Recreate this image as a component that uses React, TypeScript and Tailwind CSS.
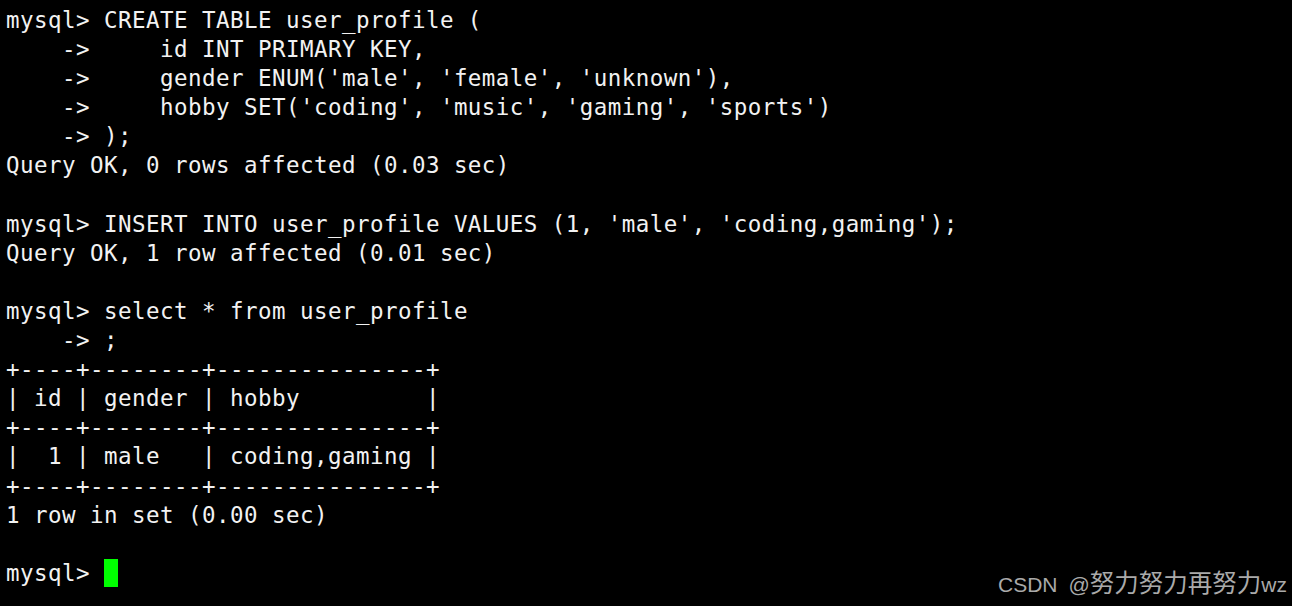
import React from "react";

const lines: string[] = [
  "mysql> CREATE TABLE user_profile (",
  "    ->     id INT PRIMARY KEY,",
  "    ->     gender ENUM('male', 'female', 'unknown'),",
  "    ->     hobby SET('coding', 'music', 'gaming', 'sports')",
  "    -> );",
  "Query OK, 0 rows affected (0.03 sec)",
  "",
  "mysql> INSERT INTO user_profile VALUES (1, 'male', 'coding,gaming');",
  "Query OK, 1 row affected (0.01 sec)",
  "",
  "mysql> select * from user_profile",
  "    -> ;",
  "+----+--------+---------------+",
  "| id | gender | hobby         |",
  "+----+--------+---------------+",
  "|  1 | male   | coding,gaming |",
  "+----+--------+---------------+",
  "1 row in set (0.00 sec)",
  "",
];

export default function App() {
  return (
    <div className="relative w-[1292px] h-[606px] bg-black overflow-hidden">
      <div
        className="pt-[6px] pl-[6px] text-[22.5px] leading-[29.1px] tracking-[0.45px] text-[#f2f2f2] whitespace-pre"
        style={{ fontFamily: '"DejaVu Sans Mono", monospace' }}
      >
        {lines.map((l, i) => (
          <div key={i} className="h-[29.1px]">
            {l}
          </div>
        ))}
        <div className="h-[29.1px] flex items-center">
          <span>mysql&gt; </span>
          <span className="inline-block w-[14px] h-[28px] bg-[#00ff00]" />
        </div>
      </div>
      <div
        className="absolute right-[5px] bottom-[11px] flex items-baseline text-[#aaaaaa] text-[21px] leading-none"
        style={{ fontFamily: '"Liberation Sans", "Noto Sans CJK SC", sans-serif' }}
      >
        <span>CSDN</span>
        <span className="ml-[11px]">@</span>
        <span className="text-[24.5px]" style={{ fontFamily: '"Noto Sans CJK SC", sans-serif' }}>
          努力努力再努力
        </span>
        <span>wz</span>
      </div>
    </div>
  );
}
